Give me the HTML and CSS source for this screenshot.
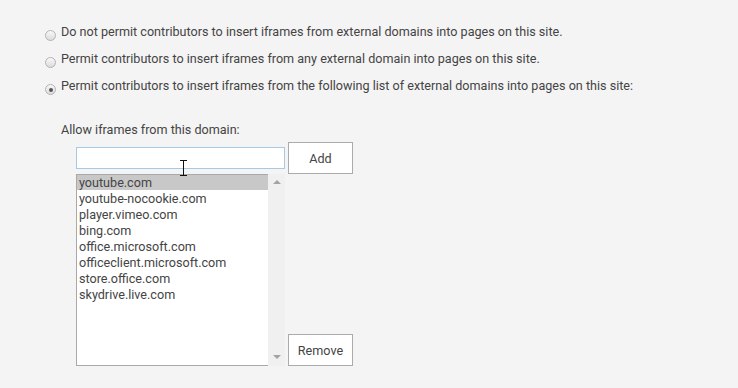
FILE: index.html
```html
<!DOCTYPE html>
<html>
<head>
<meta charset="utf-8">
<link rel="stylesheet" href="styles.css">
</head>
<body>
<div class="page">
  <div class="options">
    <label class="opt"><span class="radio"></span><span class="txt">Do not permit contributors to insert iframes from external domains into pages on this site.</span></label>
    <label class="opt"><span class="radio"></span><span class="txt">Permit contributors to insert iframes from any external domain into pages on this site.</span></label>
    <label class="opt"><span class="radio checked"></span><span class="txt">Permit contributors to insert iframes from the following list of external domains into pages on this site:</span></label>
  </div>
  <div class="domains">
    <div class="allow">Allow iframes from this domain:</div>
    <div class="editor">
      <div class="row row-top">
        <div class="input"><svg class="ibeam" width="9" height="16" viewBox="0 0 9 16"><path d="M1 0.5h7M4.5 0.5v15M1 15.5h7" stroke="#111" stroke-width="1" fill="none"/></svg></div>
        <div class="btn">Add</div>
      </div>
      <div class="row row-bottom">
        <div class="listbox">
          <div class="items">
            <div class="item selected">youtube.com</div>
            <div class="item">youtube-nocookie.com</div>
            <div class="item">player.vimeo.com</div>
            <div class="item">bing.com</div>
            <div class="item">office.microsoft.com</div>
            <div class="item">officeclient.microsoft.com</div>
            <div class="item">store.office.com</div>
            <div class="item">skydrive.live.com</div>
          </div>
          <div class="scroll"><span class="arrow up"></span><span class="arrow down"></span></div>
        </div>
        <div class="btn">Remove</div>
      </div>
    </div>
  </div>
</div>
</body>
</html>
```
FILE: styles.css
```css
html, body {
  margin: 0;
  padding: 0;
  background: #f4f4f4;
}
body {
  font-family: Roboto, "Liberation Sans", sans-serif;
  font-size: 12.6px;
  color: #444;
  width: 738px;
  height: 388px;
  overflow: hidden;
}
.page {
  padding: 24px 0 0 45px;
}
.options {
  display: flex;
  flex-direction: column;
  gap: 11px;
}
.opt {
  display: flex;
  align-items: flex-start;
  height: 16px;
  line-height: 16px;
}
.radio {
  width: 9px;
  height: 9px;
  border: 1px solid #b3b3b3;
  border-radius: 50%;
  background: linear-gradient(#f8f8f8, #dcdcdc);
  margin-top: 6px;
  margin-right: 5px;
  flex: none;
  position: relative;
}
.radio.checked::after {
  content: "";
  position: absolute;
  left: 2.5px;
  top: 2.5px;
  width: 4px;
  height: 4px;
  border-radius: 50%;
  background: #555;
}
.domains {
  padding-left: 16px;
  margin-top: 28px;
}
.allow {
  line-height: 16px;
}
.editor {
  margin-top: 4px;
  padding-left: 15px;
  display: flex;
  flex-direction: column;
}
.row {
  display: flex;
  gap: 3px;
}
.row-top {
  align-items: center;
}
.row-bottom {
  align-items: flex-end;
}
.input {
  width: 207px;
  height: 20px;
  border: 1px solid #a6c9e8;
  background: #fff;
  position: relative;
}
.ibeam {
  position: absolute;
  left: 102px;
  top: 12px;
}
.btn {
  box-sizing: border-box;
  width: 65px;
  height: 32px;
  border: 1px solid #ababab;
  background: #fff;
  display: flex;
  align-items: center;
  justify-content: center;
  color: #444;
}
.listbox {
  display: flex;
  width: 209px;
  height: 192px;
}
.items {
  flex: 1;
  border: 1px solid #a9a9a9;
  border-right: none;
  background: #fff;
}
.item {
  height: 16px;
  line-height: 16px;
  padding-left: 2px;
  white-space: nowrap;
}
.item.selected {
  background: #c8c8c8;
  height: 15px;
  line-height: 15px;
  margin-bottom: 1px;
}
.scroll {
  width: 17px;
  background: #f0f0f0;
  position: relative;
}
.arrow {
  position: absolute;
  left: 5px;
  width: 0;
  height: 0;
  border-left: 4px solid transparent;
  border-right: 4px solid transparent;
}
.arrow.up {
  top: 6px;
  border-bottom: 4px solid #a3a3a3;
}
.arrow.down {
  bottom: 7px;
  border-top: 4px solid #a3a3a3;
}
```
